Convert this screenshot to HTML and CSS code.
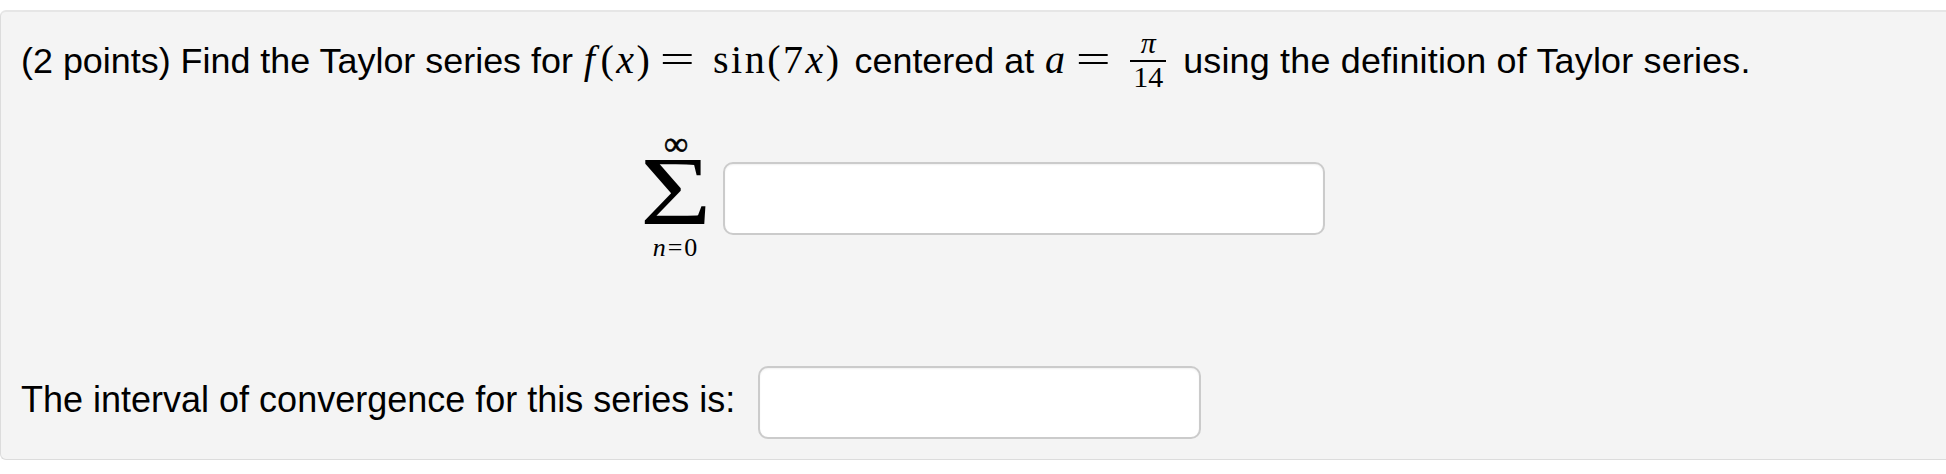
FILE: index.html
```html
<!DOCTYPE html>
<html>
<head>
<meta charset="utf-8">
<link rel="stylesheet" href="styles.css">
</head>
<body>
<div class="panel">
  <p class="question">(2 points) Find the Taylor series for <span class="math"><i class="fn">f</i>(<i>x</i>)<span class="rel">=</span>sin(7<i>x</i>)</span> centered at <span class="math"><i>a</i><span class="rel">=</span><span class="frac"><span class="num"><i>π</i></span><span class="den">14</span></span></span> <span class="tail">using the definition of Taylor series.</span></p>
  <div class="series-row">
    <div class="sum">
      <span class="sum-top">∞</span>
      <span class="sum-sign">Σ</span>
      <span class="sum-bot"><i>n</i>=0</span>
    </div>
    <input class="answer answer-wide" type="text">
  </div>
  <div class="interval-row">
    <span class="label">The interval of convergence for this series is:</span>
    <input class="answer answer-short" type="text">
  </div>
</div>
</body>
</html>
```

FILE: styles.css
```css
html, body {
  margin: 0;
  padding: 0;
  background: #ffffff;
}

body {
  font-family: "Liberation Sans", Arial, Helvetica, sans-serif;
  color: #000;
}

.panel {
  margin-top: 10px;
  height: 450px;
  box-sizing: border-box;
  background: #f4f4f4;
  border: 1px solid #dcdcdc;
  border-top: 2px solid #e6e6e6;
  border-right: none;
  border-radius: 6px 0 0 6px;
  padding: 29px 0 0 20px;
}

.question {
  margin: 0;
  height: 40px;
  font-size: 35.9px;
  line-height: 40px;
  white-space: nowrap;
}

.tail {
  letter-spacing: 0.2px;
}

.math {
  font-family: "Liberation Serif", "Times New Roman", serif;
  font-size: 40px;
  line-height: 30px;
  letter-spacing: 2.5px;
  margin: 0 3px 0 1px;
}

.math i {
  font-style: italic;
}

.fn {
  margin-right: 3px;
}

.rel {
  display: inline-block;
  transform: scaleX(1.55);
  margin: 0 24px 0 14px;
  letter-spacing: 0;
}

.frac {
  display: inline-block;
  vertical-align: -14px;
  text-align: center;
  padding: 0 1px;
  margin-left: 1px;
  margin-right: 3px;
  letter-spacing: 0;
}

.num {
  display: block;
  font-size: 30px;
  line-height: 4px;
  height: 4px;
  padding-bottom: 15px;
  border-bottom: 2px solid #000;
}

.den {
  display: block;
  font-size: 30px;
  line-height: 24px;
  padding: 3px 3px 0;
}

.series-row {
  display: flex;
  align-items: center;
  margin-top: 53px;
  padding-left: 630px;
  gap: 22px;
}

.sum {
  display: flex;
  flex-direction: column;
  align-items: center;
  width: 50px;
  font-family: "Liberation Serif", "Times New Roman", serif;
}

.sum-top {
  font-size: 34px;
  line-height: 20px;
  height: 20px;
  -webkit-text-stroke: 0.6px #000;
}

.sum-sign {
  font-size: 82px;
  line-height: 76px;
  height: 76px;
  transform: scale(1.5, 1.18);
}

.sum-bot {
  font-size: 26px;
  line-height: 28px;
  letter-spacing: 2px;
  margin-top: 4px;
}

.answer {
  box-sizing: border-box;
  height: 73px;
  background: #ffffff;
  border: 2px solid #cbcbcb;
  border-radius: 10px;
  box-shadow: inset 0 1px 2px rgba(0, 0, 0, 0.06);
  margin: 0;
  padding: 0 12px;
  font-size: 30px;
  outline: none;
}

.answer-wide {
  width: 602px;
}

.answer-short {
  width: 443px;
}

.interval-row {
  display: flex;
  align-items: center;
  gap: 23px;
  margin-top: 104px;
}

.label {
  font-size: 36px;
  line-height: 40px;
  white-space: nowrap;
  margin-bottom: 5px;
}
```
